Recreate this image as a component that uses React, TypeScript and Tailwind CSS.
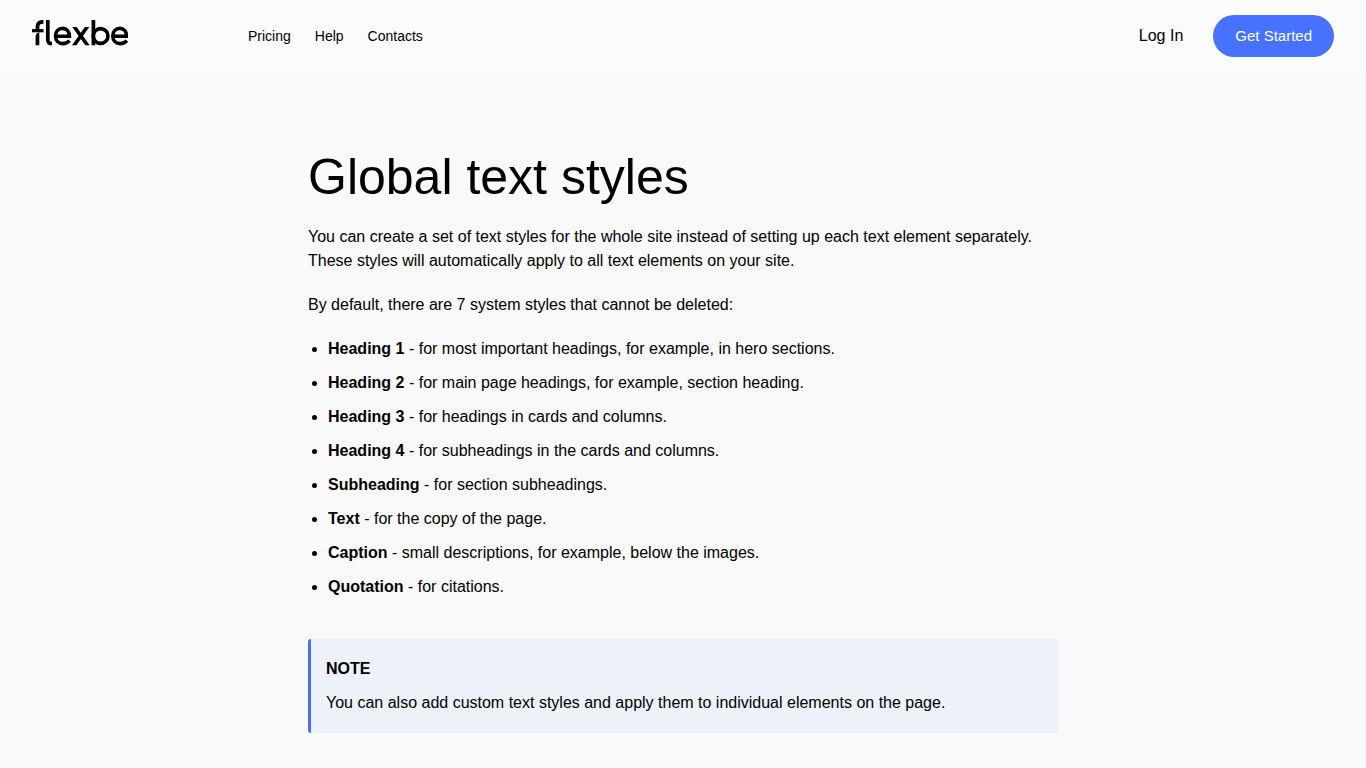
import type { ReactNode } from "react"

const navLinks = ["Pricing", "Help", "Contacts"]

const systemStyles = [
  { name: "Heading 1", text: "for most important headings, for example, in hero sections." },
  { name: "Heading 2", text: "for main page headings, for example, section heading." },
  { name: "Heading 3", text: "for headings in cards and columns." },
  { name: "Heading 4", text: "for subheadings in the cards and columns." },
  { name: "Subheading", text: "for section subheadings." },
  { name: "Text", text: "for the copy of the page." },
  { name: "Caption", text: "small descriptions, for example, below the images." },
  { name: "Quotation", text: "for citations." },
]

function Logo() {
  return (
    <svg width="96" height="26" viewBox="0 0 96 26" fill="none" stroke="#000" strokeWidth="3.7" aria-hidden="true">
      <path d="M11.5 1.8H10.4C7 1.8 5.5 3.6 5.5 6.8V10.7" />
      <path d="M0 10.7H11.5" strokeWidth="3.2" />
      <path d="M7.3 12.3V25.3H3.6V16.6C3.6 14.4 4.6 13 7.3 12.3Z" fill="#000" stroke="none" />
      <path d="M15.8 0V19.8C15.8 22.6 17 23.6 20 23.5" />
      <path d="M23.5 16.2H37.4C37.4 11.6 34.7 8.4 30.7 8.4C26.4 8.4 23.5 11.6 23.5 16C23.5 20.5 26.5 23.6 30.9 23.6C33.6 23.6 35.8 22.6 37.5 20.6" strokeWidth="3.6" />
      <path d="M40.2 7H44.6L57.7 25.3H53.3ZM52.9 7H57.3L44.4 25.3H40Z" fill="#000" stroke="none" />
      <path d="M61.4 0V25.3" />
      <circle cx="68.6" cy="16" r="7.4" strokeWidth="3.6" />
      <path d="M80.9 16.2H94.6C94.6 11.6 91.9 8.4 87.9 8.4C83.7 8.4 80.8 11.6 80.8 16C80.8 20.5 83.8 23.6 88.2 23.6C90.9 23.6 93.1 22.6 94.8 20.6" strokeWidth="3.6" />
    </svg>
  )
}

function Header() {
  return (
    <header className="flex h-[72px] items-center bg-[#fbfbfb] px-8">
      <a href="#" aria-label="flexbe" className="mr-[120px] mb-1.5">
        <Logo />
      </a>
      <nav className="flex gap-6 text-sm">
        {navLinks.map((label) => (
          <a key={label} href="#">{label}</a>
        ))}
      </nav>
      <div className="ml-auto flex items-center gap-[30px]">
        <a href="#" className="text-base">Log In</a>
        <button type="button" className="h-[42px] rounded-full bg-[#4672ff] px-[22px] text-[15px] text-white">
          Get Started
        </button>
      </div>
    </header>
  )
}

function Note({ children }: { children: ReactNode }) {
  return (
    <aside className="mt-10 rounded-[3px] border-l-3 border-[#4c6ef5] bg-[#edf1fa] px-[15px] py-[18px]">
      <p className="mb-[10px] font-bold">NOTE</p>
      <p>{children}</p>
    </aside>
  )
}

export default function App() {
  return (
    <div className="min-h-screen bg-[#f9f9f9] font-['Liberation_Sans',Arial,sans-serif] text-base text-black">
      <Header />
      <main className="mx-auto max-w-[750px] pt-[75px] pb-9">
        <h1 className="mb-[18px] text-[50px] leading-[60px]">Global text styles</h1>
        <p className="mb-5">
          You can create a set of text styles for the whole site instead of setting up each text element separately.
          These styles will automatically apply to all text elements on your site.
        </p>
        <p className="mb-5">By default, there are 7 system styles that cannot be deleted:</p>
        <ul className="flex list-disc flex-col gap-[10px] pl-5">
          {systemStyles.map((style) => (
            <li key={style.name}>
              <b>{style.name}</b> - {style.text}
            </li>
          ))}
        </ul>
        <Note>You can also add custom text styles and apply them to individual elements on the page.</Note>
      </main>
    </div>
  )
}
